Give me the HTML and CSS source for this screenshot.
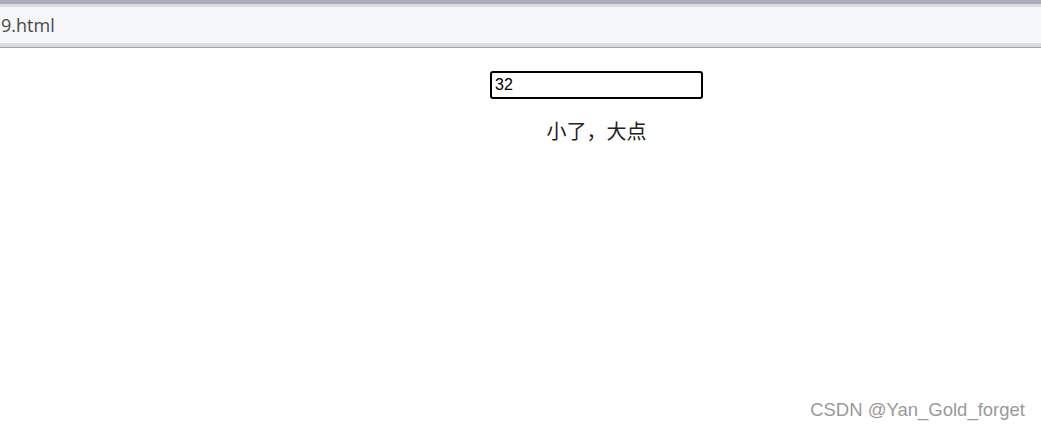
FILE: index.html
```html
<!DOCTYPE html>
<html lang="zh">
  <head>
    <meta charset="utf-8" />
    <title>9.html</title>
    <link rel="stylesheet" href="styles.css">
  </head>
  <body>
    <div class="chrome">
      <div class="chrome__tab">9.html</div>
    </div>

    <div class="guess">
      <input type="text" class="guess__input" value="32" />
      <p class="guess__hint">小了，大点</p>
    </div>

    <div class="mark">CSDN @Yan_Gold_forget</div>
  </body>
</html>
```

FILE: styles.css
```css
body {
  margin: 0;
  font-family: "Liberation Sans", Arial, "Noto Sans CJK SC", sans-serif;
  background: #fff;
}

.chrome {
  height: 48px;
  box-sizing: border-box;
  border-top: 4px solid #a9adba;
  background: #d9dbe1;
  padding: 3px 0 4px;
  border-bottom: 1px solid #a3a3a8;
}

.chrome__tab {
  height: 36px;
  line-height: 36px;
  background: #f5f6f8;
  color: #4a4a4a;
  font-family: "Open Sans", "Liberation Sans", sans-serif;
  font-size: 18px;
  padding-left: 1px;
}

.guess {
  display: flex;
  flex-direction: column;
  align-items: center;
  padding-top: 23px;
  padding-left: 152px;
}

.guess__input {
  width: 213px;
  height: 28px;
  box-sizing: border-box;
  border: 2px solid #000;
  border-radius: 3px;
  padding: 0 3px;
  font-family: "Liberation Sans", Arial, sans-serif;
  font-size: 16px;
  color: #000;
  outline: none;
}

.guess__hint {
  margin: 19px 0 0;
  font-family: "Noto Sans CJK SC", sans-serif;
  font-size: 20px;
  line-height: 26px;
  color: #222;
}

.mark {
  position: absolute;
  right: 16px;
  bottom: 8px;
  font-family: "Liberation Sans", Arial, sans-serif;
  font-size: 18.5px;
  color: #9a9a9a;
}
```
